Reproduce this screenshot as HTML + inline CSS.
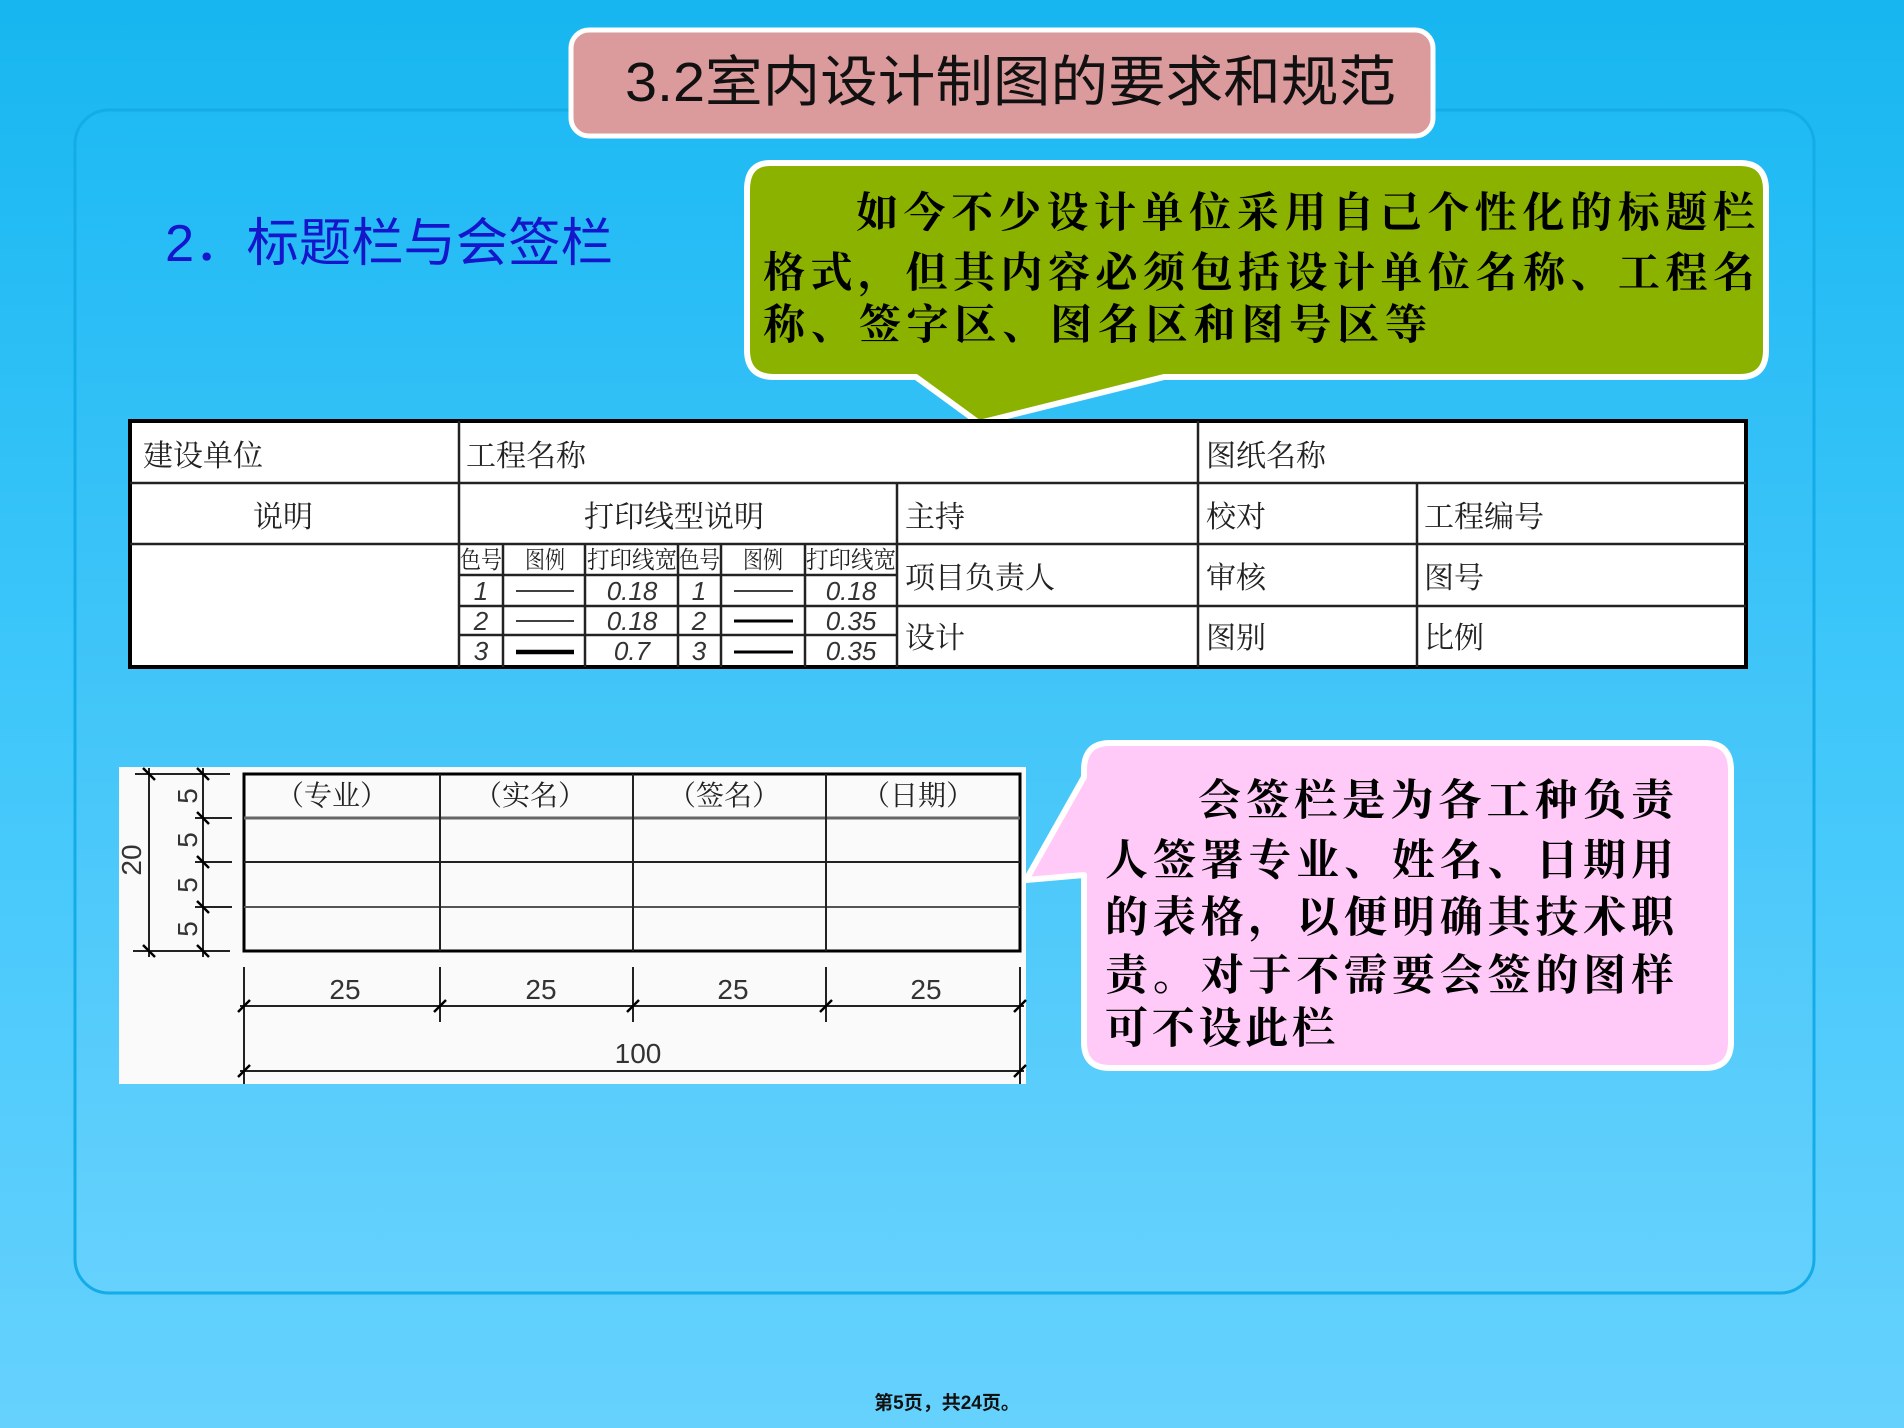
<!DOCTYPE html>
<html><head><meta charset="utf-8"><style>
html,body{margin:0;padding:0;}
body{width:1904px;height:1428px;overflow:hidden;background:linear-gradient(#17b6f0 0%,#3cc6fa 45%,#66d1fd 100%);}
svg{display:block}
.t{font-family:"Liberation Serif","Noto Serif CJK SC",serif;fill:#222;}
.b{font-family:"Liberation Serif","Noto Serif CJK SC",serif;font-weight:bold;fill:#000;}
</style></head><body>
<svg width="1904" height="1428" viewBox="0 0 1904 1428" xmlns="http://www.w3.org/2000/svg">
<defs>
<linearGradient id="pg" x1="0" y1="0" x2="0" y2="1"><stop offset="0" stop-color="#1fbaf4"/><stop offset="1" stop-color="#66d1fd"/></linearGradient>
</defs>
<!-- panel -->
<rect x="75" y="110" width="1739" height="1183" rx="34" fill="url(#pg)" stroke="#14ace6" stroke-width="3"/>
<!-- title -->
<rect x="571" y="30" width="862" height="106" rx="18" fill="#db9a9b" stroke="#fff" stroke-width="5"/>
<text x="625" y="101" font-family="Liberation Sans,'Noto Sans CJK SC',sans-serif" font-size="55" fill="#111" textLength="771" lengthAdjust="spacingAndGlyphs">3.2室内设计制图的要求和规范</text>
<!-- subtitle -->
<text x="165" y="261" font-family="Liberation Sans,'Noto Sans CJK SC',sans-serif" font-size="52" fill="#1515cc" textLength="448" lengthAdjust="spacingAndGlyphs">2．标题栏与会签栏</text>
<!-- green bubble -->
<path d="M770,163 H1740 Q1766,163 1766,190 V350 Q1766,377 1740,377 H1164 L979,423 L916,377 H774 Q747,377 747,350 V190 Q747,163 770,163 Z" fill="#8cb200" stroke="#fff" stroke-width="6" stroke-linejoin="round"/>
<text class="b" x="856" y="227" font-size="42" textLength="899" lengthAdjust="spacing">如今不少设计单位采用自己个性化的标题栏</text>
<text class="b" x="763" y="287" font-size="42" textLength="992" lengthAdjust="spacing">格式，但其内容必须包括设计单位名称、工程名</text>
<text class="b" x="763" y="339" font-size="42" textLength="664" lengthAdjust="spacing">称、签字区、图名区和图号区等</text>
<!-- table 1 -->
<rect x="130" y="421" width="1616" height="246" fill="#fff" stroke="#000" stroke-width="4"/>
<g stroke="#222" stroke-width="2.5" fill="none">
<line x1="130" y1="483" x2="1746" y2="483"/>
<line x1="130" y1="544" x2="1746" y2="544"/>
<line x1="897" y1="606" x2="1746" y2="606"/>
<line x1="459" y1="421" x2="459" y2="667"/>
<line x1="1198" y1="421" x2="1198" y2="667"/>
<line x1="897" y1="483" x2="897" y2="667"/>
<line x1="1417" y1="483" x2="1417" y2="667"/>
<line x1="459" y1="575" x2="897" y2="575"/>
<line x1="459" y1="606" x2="897" y2="606"/>
<line x1="459" y1="635" x2="897" y2="635"/>
<line x1="503" y1="544" x2="503" y2="667"/>
<line x1="585" y1="544" x2="585" y2="667"/>
<line x1="678" y1="544" x2="678" y2="667"/>
<line x1="721" y1="544" x2="721" y2="667"/>
<line x1="805" y1="544" x2="805" y2="667"/>
</g>
<g class="t" font-size="30">
<text x="143" y="466">建设单位</text>
<text x="466" y="466">工程名称</text>
<text x="1206" y="466">图纸名称</text>
<text x="283" y="527" text-anchor="middle">说明</text>
<text x="674" y="527" text-anchor="middle">打印线型说明</text>
<text x="905" y="527">主持</text>
<text x="1206" y="527">校对</text>
<text x="1424" y="527">工程编号</text>
<text x="905" y="588">项目负责人</text>
<text x="1206" y="588">审核</text>
<text x="1424" y="588">图号</text>
<text x="905" y="648">设计</text>
<text x="1206" y="648">图别</text>
<text x="1424" y="648">比例</text>
</g>
<g class="t" font-size="24">
<text x="460" y="568" textLength="42" lengthAdjust="spacingAndGlyphs">色号</text>
<text x="525" y="568" textLength="40" lengthAdjust="spacingAndGlyphs">图例</text>
<text x="587" y="568" textLength="90" lengthAdjust="spacingAndGlyphs">打印线宽</text>
<text x="679" y="568" textLength="41" lengthAdjust="spacingAndGlyphs">色号</text>
<text x="743" y="568" textLength="40" lengthAdjust="spacingAndGlyphs">图例</text>
<text x="806" y="568" textLength="90" lengthAdjust="spacingAndGlyphs">打印线宽</text>
</g>
<g font-family="Liberation Sans,sans-serif" font-style="italic" font-size="26" fill="#333" text-anchor="middle">
<text x="481" y="600">1</text><text x="632" y="600">0.18</text><text x="699" y="600">1</text><text x="851" y="600">0.18</text>
<text x="481" y="630">2</text><text x="632" y="630">0.18</text><text x="699" y="630">2</text><text x="851" y="630">0.35</text>
<text x="481" y="660">3</text><text x="632" y="660">0.7</text><text x="699" y="660">3</text><text x="851" y="660">0.35</text>
</g>
<g stroke="#000">
<line x1="516" y1="591" x2="574" y2="591" stroke-width="1.5"/>
<line x1="734" y1="591" x2="793" y2="591" stroke-width="1.5"/>
<line x1="516" y1="621" x2="574" y2="621" stroke-width="1.5"/>
<line x1="734" y1="621" x2="793" y2="621" stroke-width="3"/>
<line x1="516" y1="652" x2="574" y2="652" stroke-width="4.5"/>
<line x1="734" y1="652" x2="793" y2="652" stroke-width="3"/>
</g>
<!-- table 2 image -->
<rect x="119" y="767" width="907" height="317" fill="#fafafa"/>
<rect x="244" y="774" width="776" height="177" fill="none" stroke="#000" stroke-width="3"/>
<g stroke="#222" stroke-width="2" fill="none">
<line x1="244" y1="818" x2="1020" y2="818" stroke="#666" stroke-width="3"/>
<line x1="244" y1="862" x2="1020" y2="862"/>
<line x1="244" y1="907" x2="1020" y2="907" stroke="#555"/>
<line x1="440" y1="774" x2="440" y2="951"/>
<line x1="633" y1="774" x2="633" y2="951"/>
<line x1="826" y1="774" x2="826" y2="951"/>
<!-- left dims -->
<line x1="149" y1="768" x2="149" y2="957"/>
<line x1="203" y1="768" x2="203" y2="957"/>
<line x1="135" y1="774" x2="230" y2="774"/>
<line x1="195" y1="818" x2="232" y2="818"/>
<line x1="195" y1="862" x2="232" y2="862"/>
<line x1="195" y1="907" x2="232" y2="907"/>
<line x1="133" y1="951" x2="230" y2="951"/>
<!-- bottom dims -->
<line x1="244" y1="967" x2="244" y2="1084"/>
<line x1="440" y1="967" x2="440" y2="1022"/>
<line x1="633" y1="967" x2="633" y2="1022"/>
<line x1="826" y1="967" x2="826" y2="1022"/>
<line x1="1020" y1="967" x2="1020" y2="1084"/>
<line x1="240" y1="1006" x2="1024" y2="1006"/>
<line x1="240" y1="1071" x2="1024" y2="1071"/>
</g>
<g stroke="#000" stroke-width="2.5">
<line x1="143" y1="768" x2="155" y2="780"/><line x1="143" y1="945" x2="155" y2="957"/>
<line x1="197" y1="768" x2="209" y2="780"/><line x1="197" y1="812" x2="209" y2="824"/>
<line x1="197" y1="856" x2="209" y2="868"/><line x1="197" y1="901" x2="209" y2="913"/><line x1="197" y1="945" x2="209" y2="957"/>
<line x1="238" y1="1012" x2="250" y2="1000"/><line x1="434" y1="1012" x2="446" y2="1000"/><line x1="627" y1="1012" x2="639" y2="1000"/><line x1="820" y1="1012" x2="832" y2="1000"/><line x1="1014" y1="1012" x2="1026" y2="1000"/>
<line x1="238" y1="1077" x2="250" y2="1065"/><line x1="1014" y1="1077" x2="1026" y2="1065"/>
</g>
<g class="t" font-size="28" text-anchor="middle">
<text x="332" y="805">（专业）</text>
<text x="530" y="805">（实名）</text>
<text x="724" y="805">（签名）</text>
<text x="918" y="805">（日期）</text>
</g>
<g font-family="Liberation Sans,sans-serif" font-size="28" fill="#333" text-anchor="middle">
<text transform="translate(141,860) rotate(-90)">20</text>
<text transform="translate(197,796) rotate(-90)">5</text>
<text transform="translate(197,840) rotate(-90)">5</text>
<text transform="translate(197,885) rotate(-90)">5</text>
<text transform="translate(197,929) rotate(-90)">5</text>
<text x="345" y="999">25</text><text x="541" y="999">25</text><text x="733" y="999">25</text><text x="926" y="999">25</text>
<text x="638" y="1063">100</text>
</g>
<!-- pink bubble -->
<path d="M1110,743 H1705 Q1731,743 1731,770 V1042 Q1731,1068 1705,1068 H1110 Q1084,1068 1084,1042 V875 L1026,880 L1084,777 V770 Q1084,743 1110,743 Z" fill="#ffcaf8" stroke="#fff" stroke-width="6" stroke-linejoin="round"/>
<g class="b" font-size="43">
<text x="1198" y="815" textLength="476" lengthAdjust="spacing">会签栏是为各工种负责</text>
<text x="1105" y="875" textLength="569" lengthAdjust="spacing">人签署专业、姓名、日期用</text>
<text x="1105" y="932" textLength="569" lengthAdjust="spacing">的表格，以便明确其技术职</text>
<text x="1105" y="990" textLength="569" lengthAdjust="spacing">责。对于不需要会签的图样</text>
<text x="1105" y="1043" textLength="230" lengthAdjust="spacing">可不设此栏</text>
</g>
<!-- footer -->
<text x="947" y="1409" text-anchor="middle" font-family="Liberation Sans,'Noto Sans CJK SC',sans-serif" font-size="19" font-weight="bold" fill="#111">第5页，共24页。</text>
</svg>
</body></html>
